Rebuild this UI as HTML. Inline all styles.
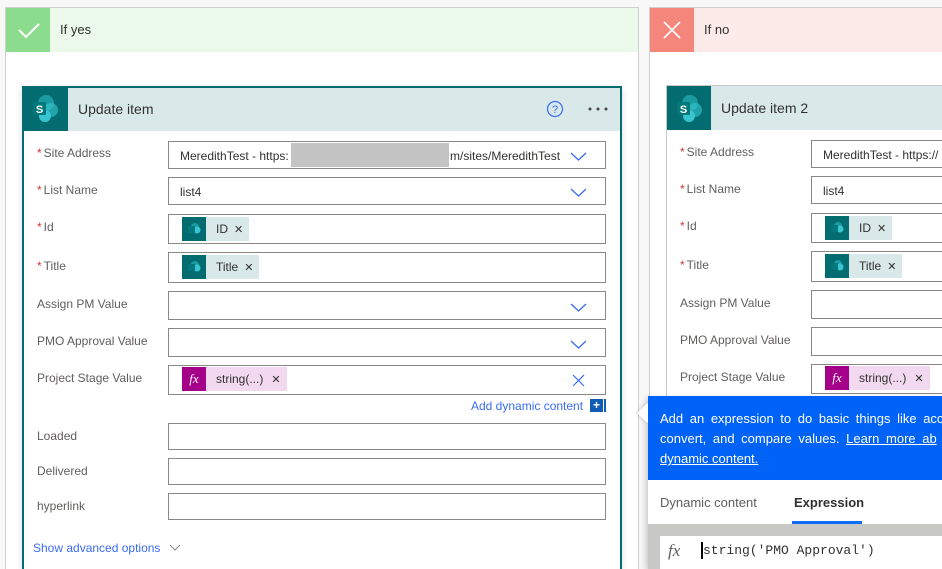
<!DOCTYPE html>
<html><head><meta charset="utf-8">
<style>
*{box-sizing:border-box;margin:0;padding:0}
html,body{width:942px;height:569px;overflow:hidden}
body{background:#f8f8f8;font-family:"Liberation Sans",sans-serif}
#w{position:relative;width:942px;height:569px;overflow:hidden;background:#f8f8f8}
.a{position:absolute}
.lbl{position:absolute;font-size:12px;color:#605e5c}
.lbl i{color:#d13438;font-style:normal;margin-right:2px}
.inp{position:absolute;border:1px solid #8a8886;background:#fff;font-size:12px;color:#323130}
.chev{position:absolute;right:18px;top:10px}
.tok{position:absolute;left:13px;top:1px;height:24px;display:flex;align-items:center;font-size:12px;color:#323130}
.tok .ic{width:24px;height:24px;display:flex;align-items:center;justify-content:center}
.tok .tx{height:24px;display:flex;align-items:center;padding:0 6px 0 10px}
.tok .x{margin-left:6px;font-size:11px}
</style></head><body><div id="w">

<div class="a" style="left:5px;top:7px;width:634px;height:562px;border:1px solid #d0d0d0;border-bottom:0;background:#fff"></div>
<div class="a" style="left:6px;top:8px;width:632px;height:44px;background:#ebf9ea"></div>
<div class="a" style="left:6px;top:8px;width:44px;height:44px;background:#8bdc8c">
<svg width="44" height="44"><path d="M13 22 L20 29 L33 16" stroke="#fff" stroke-width="2" fill="none"/></svg></div>
<div class="a" style="left:60px;top:22px;font-size:13px;color:#323130">If yes</div>

<div class="a" style="left:22px;top:86px;width:600px;height:483px;border:2px solid #036c70;border-bottom:0;background:#fff;box-shadow:0 2px 6px rgba(0,0,0,.15)"></div>
<div class="a" style="left:24px;top:88px;width:596px;height:43px;background:#d9e8e8"></div>
<div class="a" style="left:22px;top:86px;width:46px;height:45px;background:#036c70">
<svg width="46" height="45"><circle cx="24" cy="17" r="8" fill="#1a9ba1"/><circle cx="29" cy="24" r="7" fill="#37c6d0" opacity=".6"/><circle cx="23" cy="30" r="6" fill="#37c6d0"/><rect x="11" y="16" width="13" height="13" rx="1" fill="#03787c"/><text x="17.5" y="27" font-size="11" font-weight="bold" fill="#fff" text-anchor="middle" font-family="Liberation Sans">S</text></svg></div>
<div class="a" style="left:78px;top:101px;font-size:14px;color:#323130">Update item</div>
<svg class="a" style="left:546px;top:100px" width="18" height="18"><circle cx="9" cy="9" r="7.5" stroke="#3a6cf4" stroke-width="1.2" fill="none"/><text x="9" y="13" font-size="11" fill="#3a6cf4" text-anchor="middle" font-family="Liberation Sans">?</text></svg>
<svg class="a" style="left:587px;top:106px" width="22" height="6"><circle cx="3" cy="3" r="1.5" fill="#444"/><circle cx="11" cy="3" r="1.5" fill="#444"/><circle cx="19" cy="3" r="1.5" fill="#444"/></svg>

<div class="lbl" style="left:37px;top:146px"><i>*</i>Site Address</div>
<div class="inp" style="left:168px;top:141px;width:438px;height:28px"><span class="a" style="left:11px;top:7px">MeredithTest - https:</span><span class="a" style="left:122px;top:1px;width:158px;height:24px;background:#c4c4c4"></span><span class="a" style="left:281px;top:7px">m/sites/MeredithTest</span><svg class="chev" width="17" height="9"><path d="M1 1 L8.5 8 L16 1" stroke="#3a6cf4" stroke-width="1.3" fill="none"/></svg></div>
<div class="lbl" style="left:37px;top:183px"><i>*</i>List Name</div>
<div class="inp" style="left:168px;top:177px;width:438px;height:28px"><span class="a" style="left:11px;top:7px">list4</span><svg class="chev" width="17" height="9"><path d="M1 1 L8.5 8 L16 1" stroke="#3a6cf4" stroke-width="1.3" fill="none"/></svg></div>
<div class="lbl" style="left:37px;top:220px"><i>*</i>Id</div>
<div class="inp" style="left:168px;top:214px;width:438px;height:30px"><div class="tok" style="top:2px"><div class="ic" style="background:#036c70"><svg width="16" height="16"><circle cx="9" cy="6" r="4" fill="#1a9ba1"/><circle cx="11" cy="9" r="3.5" fill="#37c6d0"/><rect x="2" y="5" width="7" height="7" fill="#03787c"/></svg></div><div class="tx" style="background:#d9e8e8">ID<span class="x">✕</span></div></div></div>
<div class="lbl" style="left:37px;top:259px"><i>*</i>Title</div>
<div class="inp" style="left:168px;top:252px;width:438px;height:31px"><div class="tok" style="top:2px"><div class="ic" style="background:#036c70"><svg width="16" height="16"><circle cx="9" cy="6" r="4" fill="#1a9ba1"/><circle cx="11" cy="9" r="3.5" fill="#37c6d0"/><rect x="2" y="5" width="7" height="7" fill="#03787c"/></svg></div><div class="tx" style="background:#d9e8e8">Title<span class="x">✕</span></div></div></div>
<div class="lbl" style="left:37px;top:297px">Assign PM Value</div>
<div class="inp" style="left:168px;top:291px;width:438px;height:29px"><svg class="chev" width="17" height="9" style="top:11px"><path d="M1 1 L8.5 8 L16 1" stroke="#3a6cf4" stroke-width="1.3" fill="none"/></svg></div>
<div class="lbl" style="left:37px;top:334px">PMO Approval Value</div>
<div class="inp" style="left:168px;top:328px;width:438px;height:29px"><svg class="chev" width="17" height="9" style="top:11px"><path d="M1 1 L8.5 8 L16 1" stroke="#3a6cf4" stroke-width="1.3" fill="none"/></svg></div>
<div class="lbl" style="left:37px;top:371px">Project Stage Value</div>
<div class="inp" style="left:168px;top:365px;width:438px;height:30px"><div class="tok" style="top:1px"><div class="ic" style="background:#a5008a;color:#fff;font-family:'Liberation Serif',serif;font-style:italic;font-size:13px">fx</div><div class="tx" style="background:#f2d9ef;padding-left:10px">string(...)<span class="x" style="margin-left:8px">✕</span></div></div><svg class="a" style="right:20px;top:8px" width="13" height="13"><path d="M1 1 L12 12 M12 1 L1 12" stroke="#3a6cf4" stroke-width="1.2"/></svg></div>
<div class="a" style="left:471px;top:399px;font-size:12px;color:#3a6cf4">Add dynamic content</div>
<div class="a" style="left:590px;top:399px;width:13px;height:13px;background:#0f5bb5;color:#fff;font-size:12px;line-height:13px;text-align:center;font-weight:bold">+</div>
<div class="a" style="left:604px;top:399px;width:2px;height:13px;background:#0f5bb5"></div>
<div class="lbl" style="left:37px;top:429px">Loaded</div>
<div class="inp" style="left:168px;top:423px;width:438px;height:27px"></div>
<div class="lbl" style="left:37px;top:464px">Delivered</div>
<div class="inp" style="left:168px;top:458px;width:438px;height:27px"></div>
<div class="lbl" style="left:37px;top:499px">hyperlink</div>
<div class="inp" style="left:168px;top:493px;width:438px;height:27px"></div>
<div class="a" style="left:33px;top:541px;font-size:12px;color:#3a6cf4">Show advanced options</div>
<svg class="a" style="left:169px;top:544px" width="12" height="7"><path d="M1 1 L6 6 L11 1" stroke="#8a8886" fill="none"/></svg>

<div class="a" style="left:649px;top:7px;width:293px;height:562px;border:1px solid #d0d0d0;border-bottom:0;border-right:0;background:#fff"></div>
<div class="a" style="left:650px;top:8px;width:292px;height:44px;background:#fdebe9"></div>
<div class="a" style="left:650px;top:8px;width:44px;height:44px;background:#f4867c">
<svg width="44" height="44"><path d="M14 14 L30 30 M30 14 L14 30" stroke="#fff" stroke-width="1.6"/></svg></div>
<div class="a" style="left:704px;top:22px;font-size:13px;color:#323130">If no</div>
<div class="a" style="left:666px;top:85px;width:276px;height:484px;border:1px solid #c8c8c8;border-bottom:0;border-right:0;background:#fff"></div>
<div class="a" style="left:667px;top:86px;width:275px;height:44px;background:#d9e8e8"></div>
<div class="a" style="left:667px;top:86px;width:44px;height:44px;background:#036c70">
<svg width="44" height="44"><circle cx="23" cy="17" r="8" fill="#1a9ba1"/><circle cx="28" cy="24" r="7" fill="#37c6d0" opacity=".6"/><circle cx="22" cy="30" r="6" fill="#37c6d0"/><rect x="10" y="16" width="13" height="13" rx="1" fill="#03787c"/><text x="16.5" y="27" font-size="11" font-weight="bold" fill="#fff" text-anchor="middle" font-family="Liberation Sans">S</text></svg></div>
<div class="a" style="left:721px;top:100px;font-size:14px;color:#323130">Update item 2</div>

<div class="lbl" style="left:680px;top:145px"><i>*</i>Site Address</div>
<div class="inp" style="left:811px;top:140px;width:131px;height:28px;border-right:0;overflow:hidden"><span class="a" style="left:11px;top:7px;white-space:nowrap">MeredithTest - https://</span></div>
<div class="lbl" style="left:680px;top:182px"><i>*</i>List Name</div>
<div class="inp" style="left:811px;top:176px;width:131px;height:28px;border-right:0"><span class="a" style="left:11px;top:7px">list4</span></div>
<div class="lbl" style="left:680px;top:219px"><i>*</i>Id</div>
<div class="inp" style="left:811px;top:213px;width:131px;height:30px;border-right:0"><div class="tok" style="top:2px"><div class="ic" style="background:#036c70"><svg width="16" height="16"><circle cx="9" cy="6" r="4" fill="#1a9ba1"/><circle cx="11" cy="9" r="3.5" fill="#37c6d0"/><rect x="2" y="5" width="7" height="7" fill="#03787c"/></svg></div><div class="tx" style="background:#d9e8e8">ID<span class="x">✕</span></div></div></div>
<div class="lbl" style="left:680px;top:258px"><i>*</i>Title</div>
<div class="inp" style="left:811px;top:251px;width:131px;height:31px;border-right:0"><div class="tok" style="top:2px"><div class="ic" style="background:#036c70"><svg width="16" height="16"><circle cx="9" cy="6" r="4" fill="#1a9ba1"/><circle cx="11" cy="9" r="3.5" fill="#37c6d0"/><rect x="2" y="5" width="7" height="7" fill="#03787c"/></svg></div><div class="tx" style="background:#d9e8e8">Title<span class="x">✕</span></div></div></div>
<div class="lbl" style="left:680px;top:296px">Assign PM Value</div>
<div class="inp" style="left:811px;top:290px;width:131px;height:29px;border-right:0"></div>
<div class="lbl" style="left:680px;top:333px">PMO Approval Value</div>
<div class="inp" style="left:811px;top:327px;width:131px;height:29px;border-right:0"></div>
<div class="lbl" style="left:680px;top:370px">Project Stage Value</div>
<div class="inp" style="left:811px;top:364px;width:131px;height:30px;border-right:0"><div class="tok" style="top:1px"><div class="ic" style="background:#a5008a;color:#fff;font-family:'Liberation Serif',serif;font-style:italic;font-size:13px">fx</div><div class="tx" style="background:#f2d9ef">string(...)<span class="x" style="margin-left:8px">✕</span></div></div></div>

<div class="a" style="left:648px;top:396px;width:294px;height:173px;background:#fff;box-shadow:-2px 2px 6px rgba(0,0,0,.2)"></div>
<div class="a" style="left:640px;top:406px;width:14px;height:14px;background:#fff;transform:rotate(45deg);box-shadow:-1px 1px 3px rgba(0,0,0,.15)"></div>
<div class="a" style="left:648px;top:396px;width:294px;height:84px;background:#0063f7;overflow:hidden"><div class="a" style="left:12px;top:13px;font-size:13px;color:#fff;line-height:20px;white-space:nowrap;word-spacing:3px">Add an expression to do basic things like acc<br>convert, and compare values. <u>Learn more ab</u><br><u style="word-spacing:0">dynamic content.</u></div></div>
<div class="a" style="left:660px;top:495px;font-size:13px;color:#605e5c">Dynamic content</div>
<div class="a" style="left:794px;top:495px;font-size:13px;color:#323130;font-weight:bold">Expression</div>
<div class="a" style="left:792px;top:521px;width:70px;height:3px;background:#0f6cf4"></div>
<div class="a" style="left:648px;top:524px;width:294px;height:45px;background:#c8c8c6"></div>
<div class="a" style="left:660px;top:536px;width:282px;height:33px;background:#fff"></div>
<div class="a" style="left:668px;top:541px;font-family:'Liberation Serif',serif;font-style:italic;font-size:17px;color:#605e5c">fx</div>
<div class="a" style="left:701px;top:542px;width:2px;height:17px;background:#000"></div>
<div class="a" style="left:703px;top:543px;font-family:'Liberation Mono',monospace;font-size:13px;color:#323130">string('PMO Approval')</div>
</div></body></html>
